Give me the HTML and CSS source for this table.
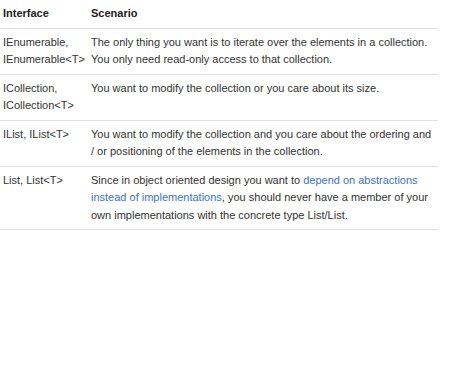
FILE: index.html
```html
<!DOCTYPE html>
<html>
<head>
<meta charset="utf-8">
<link rel="stylesheet" href="styles.css">
</head>
<body>
<table class="tbl">
  <thead>
    <tr><th class="c1">Interface</th><th class="c2">Scenario</th></tr>
  </thead>
  <tbody>
    <tr><td>IEnumerable, IEnumerable&lt;T&gt;</td><td>The only thing you want is to iterate over the elements in a collection. You only need read-only access to that collection.</td></tr>
    <tr><td>ICollection, ICollection&lt;T&gt;</td><td>You want to modify the collection or you care about its size.</td></tr>
    <tr><td>IList, IList&lt;T&gt;</td><td>You want to modify the collection and you care about the ordering and / or positioning of the elements in the collection.</td></tr>
    <tr><td>List, List&lt;T&gt;</td><td>Since in object oriented design you want to <a href="#">depend on abstractions instead of implementations</a>, you should never have a member of your own implementations with the concrete type List/List.</td></tr>
  </tbody>
</table>
</body>
</html>
```
FILE: styles.css
```css
html, body { margin: 0; padding: 0; background: #fff; }
body {
  font-family: "Liberation Sans", Arial, sans-serif;
  font-size: 11px;
  line-height: 17.5px;
  color: #333;
}
.tbl {
  border-collapse: collapse;
  width: 438px;
  margin: 0;
  table-layout: fixed;
}
.tbl th, .tbl td {
  text-align: left;
  vertical-align: top;
  padding: 5px 3px;
}
.tbl th { font-weight: bold; color: #222; }
.tbl td { border-top: 1px solid #e2e2e2; }
.tbl tbody tr:last-child td { border-bottom: 1px solid #e2e2e2; }
.c1 { width: 82px; }
.tbl a { color: #3c74c0; text-decoration: none; }
```
